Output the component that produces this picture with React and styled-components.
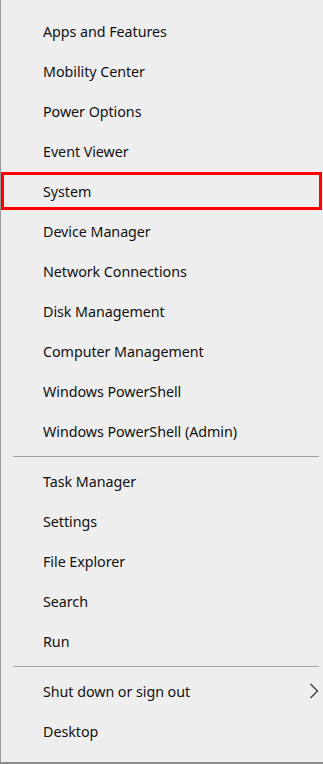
import React from "react";
import styled, { createGlobalStyle } from "styled-components";

const Global = createGlobalStyle`
  html, body { margin: 0; padding: 0; background: #eeeeee; }
  #root { width: 323px; height: 764px; }
`;

const Menu = styled.div`
  box-sizing: border-box;
  width: 323px;
  height: 764px;
  background: #eeeeee;
  border-left: 1px solid #9a9a9a;
  border-bottom: 2px solid #8c8c8c;
  padding: 11px 0 0 0;
  display: flex;
  flex-direction: column;
  font-family: "Noto Sans", "Open Sans", sans-serif;
`;

const Item = styled.div`
  box-sizing: border-box;
  height: ${(p) => (p.$active ? "38px" : "40px")};
  margin: ${(p) => (p.$active ? "1px 1px 1px 0" : "0")};
  border: ${(p) => (p.$active ? "3px solid #ff0000" : "none")};
  padding: 0 0 0 ${(p) => (p.$active ? "39px" : "42px")};
  display: flex;
  align-items: center;
  justify-content: space-between;
  font-size: 14.3px;
  color: #111111;
  letter-spacing: -0.05px;
`;

const Separator = styled.div`
  height: 10px;
  display: flex;
  align-items: center;
  padding: 0 4px 0 12px;
  &::after {
    content: "";
    flex: 1;
    height: 1px;
    background: #a3a3a3;
  }
`;

const Chevron = styled.svg`
  width: 10px;
  height: 16px;
  margin-right: 4px;
`;

const group1 = [
  "Apps and Features",
  "Mobility Center",
  "Power Options",
  "Event Viewer",
  "System",
  "Device Manager",
  "Network Connections",
  "Disk Management",
  "Computer Management",
  "Windows PowerShell",
  "Windows PowerShell (Admin)",
];
const group2 = ["Task Manager", "Settings", "File Explorer", "Search", "Run"];

export default function App() {
  return (
    <>
      <Global />
      <Menu>
        {group1.map((t) => (
          <Item key={t} $active={t === "System"}>
            {t}
          </Item>
        ))}
        <Separator />
        {group2.map((t) => (
          <Item key={t}>{t}</Item>
        ))}
        <Separator />
        <Item>
          Shut down or sign out
          <Chevron viewBox="0 0 10 16">
            <path d="M1.5 1 L8.5 8 L1.5 15" fill="none" stroke="#333" strokeWidth="1.2" />
          </Chevron>
        </Item>
        <Item>Desktop</Item>
      </Menu>
    </>
  );
}
